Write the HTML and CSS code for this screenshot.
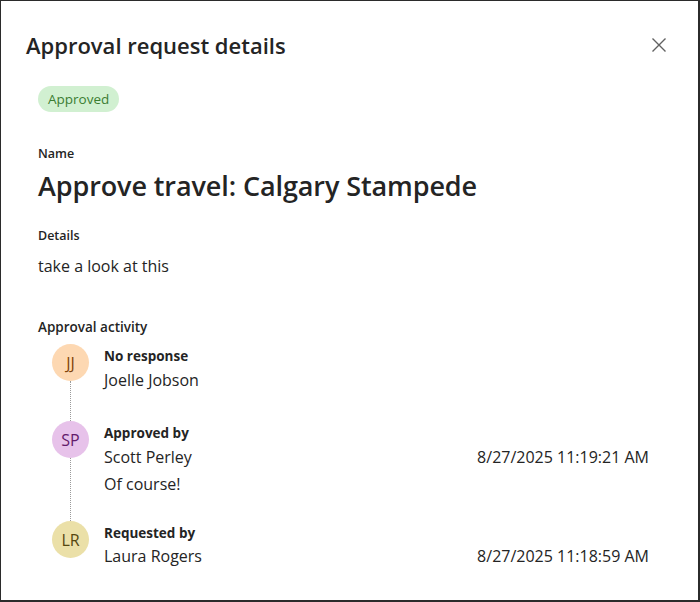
FILE: index.html
```html
<!DOCTYPE html>
<html lang="en">
<head>
<meta charset="utf-8">
<title>Approval request details</title>
<link rel="stylesheet" href="styles.css">
</head>
<body>
<div class="panel">
  <header class="panel-header">
    <h1 class="panel-title">Approval request details</h1>
    <button class="close-btn" aria-label="Close">
      <svg width="16" height="16" viewBox="0 0 16 16"><path d="M1.5 1.5 L14.5 14.5 M14.5 1.5 L1.5 14.5" stroke="#616161" stroke-width="1.4" fill="none"/></svg>
    </button>
  </header>
  <div class="panel-body">
    <span class="badge">Approved</span>
    <div class="field field-name">
      <div class="label">Name</div>
      <div class="name-value">Approve travel: Calgary Stampede</div>
    </div>
    <div class="field field-details">
      <div class="label">Details</div>
      <div class="details-value">take a look at this</div>
    </div>
    <div class="activity">
      <div class="label label-activity">Approval activity</div>
      <ul class="timeline">
        <li class="step">
          <div class="rail"><span class="avatar av-jj">JJ</span><span class="line"></span></div>
          <div class="step-body">
            <div class="step-title">No response</div>
            <div class="step-row"><span>Joelle Jobson</span></div>
          </div>
        </li>
        <li class="step">
          <div class="rail"><span class="avatar av-sp">SP</span><span class="line"></span></div>
          <div class="step-body">
            <div class="step-title">Approved by</div>
            <div class="step-row"><span>Scott Perley</span><span class="date">8/27/2025 11:19:21 AM</span></div>
            <div class="comment">Of course!</div>
          </div>
        </li>
        <li class="step last">
          <div class="rail"><span class="avatar av-lr">LR</span></div>
          <div class="step-body">
            <div class="step-title">Requested by</div>
            <div class="step-row"><span>Laura Rogers</span><span class="date">8/27/2025 11:18:59 AM</span></div>
          </div>
        </li>
      </ul>
    </div>
  </div>
</div>
</body>
</html>
```

FILE: styles.css
```css
* { box-sizing: border-box; }
html, body { margin: 0; padding: 0; background: #fff; }
body {
  font-family: "Open Sans", "Noto Sans", sans-serif;
  color: #242424;
}
.panel {
  width: 700px;
  height: 602px;
  border-top: 1px solid #2b2b2b;
  border-left: 1px solid #2b2b2b;
  border-right: 2px solid #2b2b2b;
  border-bottom: 2px solid #2b2b2b;
  padding: 0 0 0 25px;
  overflow: hidden;
}
.panel-header {
  display: flex;
  align-items: center;
  justify-content: space-between;
  padding: 29px 31px 26px 0;
}
.panel-title {
  margin: 0;
  font-size: 22px;
  line-height: 30px;
  font-weight: 600;
}
.close-btn {
  border: 0;
  background: none;
  padding: 0;
  width: 16px;
  height: 16px;
  display: flex;
}
.panel-body {
  padding-left: 12px;
}
.badge {
  display: inline-block;
  height: 26px;
  line-height: 26px;
  padding: 0 10px;
  border-radius: 13px;
  background: #d1f0d1;
  color: #3b7d31;
  font-size: 13.5px;
}
.label {
  font-size: 12.5px;
  font-weight: 600;
  line-height: 16px;
}
.label-activity {
  font-size: 13.5px;
  line-height: 20px;
}
.field-name { margin-top: 34px; }
.name-value {
  margin-top: 6px;
  font-size: 27px;
  font-weight: 600;
  line-height: 36px;
  letter-spacing: -0.1px;
}
.field-details { margin-top: 24px; }
.details-value {
  margin-top: 11px;
  font-size: 16px;
  line-height: 22px;
}
.activity { margin-top: 40px; }
.timeline {
  list-style: none;
  margin: 7px 0 0 14px;
  padding: 0;
}
.step {
  display: flex;
  gap: 15px;
}
.rail {
  width: 37px;
  display: flex;
  flex-direction: column;
  align-items: center;
}
.avatar {
  width: 37px;
  height: 37px;
  border-radius: 50%;
  display: flex;
  align-items: center;
  justify-content: center;
  font-size: 16px;
  flex: none;
}
.av-jj { background: #fdd8b2; color: #7f4309; }
.av-sp { background: #e7c2ea; color: #631a6b; }
.av-lr { background: #ebe0a8; color: #554710; }
.line {
  flex: 1;
  width: 0;
  border-left: 1px dotted #9a9a9a;
}
.step-body {
  flex: 1;
  padding-top: 3px;
  padding-right: 49px;
  padding-bottom: 26px;
}
.step:first-child .step-body { padding-bottom: 30px; }
.step.last .step-body { padding-bottom: 0; }
.step-title {
  font-size: 13.5px;
  font-weight: 700;
  line-height: 18px;
}
.step-row {
  display: flex;
  justify-content: space-between;
  font-size: 16px;
  line-height: 22px;
  margin-top: 4px;
}
.step.last .step-row { margin-top: 3px; }
.comment {
  font-size: 16px;
  line-height: 22px;
  margin-top: 5px;
}
```
